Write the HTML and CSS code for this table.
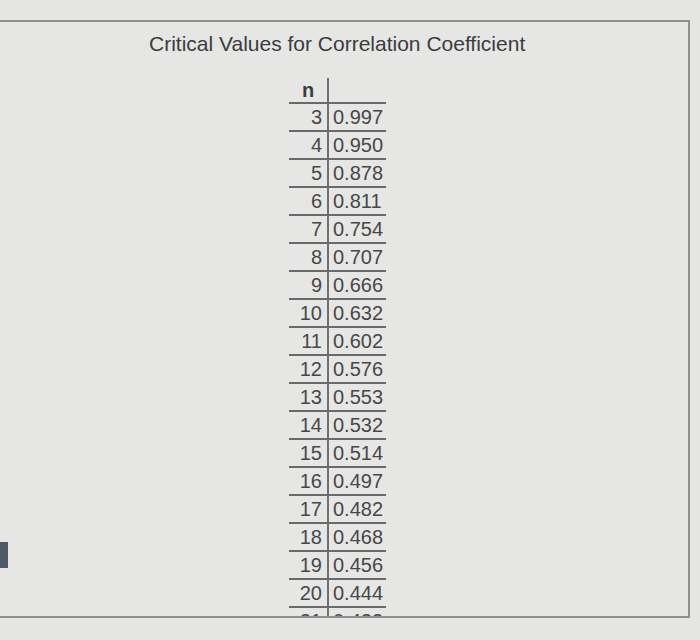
FILE: index.html
```html
<!DOCTYPE html>
<html>
<head>
<meta charset="utf-8">
<link rel="stylesheet" href="styles.css">
</head>
<body>
<div class="frame">
  <h1 class="title">Critical Values for Correlation Coefficient</h1>
  <div class="table">
    <div class="row head"><div class="n">n</div><div class="v"></div></div>
    <div class="row"><div class="n">3</div><div class="v">0.997</div></div>
    <div class="row"><div class="n">4</div><div class="v">0.950</div></div>
    <div class="row"><div class="n">5</div><div class="v">0.878</div></div>
    <div class="row"><div class="n">6</div><div class="v">0.811</div></div>
    <div class="row"><div class="n">7</div><div class="v">0.754</div></div>
    <div class="row"><div class="n">8</div><div class="v">0.707</div></div>
    <div class="row"><div class="n">9</div><div class="v">0.666</div></div>
    <div class="row"><div class="n">10</div><div class="v">0.632</div></div>
    <div class="row"><div class="n">11</div><div class="v">0.602</div></div>
    <div class="row"><div class="n">12</div><div class="v">0.576</div></div>
    <div class="row"><div class="n">13</div><div class="v">0.553</div></div>
    <div class="row"><div class="n">14</div><div class="v">0.532</div></div>
    <div class="row"><div class="n">15</div><div class="v">0.514</div></div>
    <div class="row"><div class="n">16</div><div class="v">0.497</div></div>
    <div class="row"><div class="n">17</div><div class="v">0.482</div></div>
    <div class="row"><div class="n">18</div><div class="v">0.468</div></div>
    <div class="row"><div class="n">19</div><div class="v">0.456</div></div>
    <div class="row"><div class="n">20</div><div class="v">0.444</div></div>
    <div class="row"><div class="n">21</div><div class="v">0.423</div></div>
  </div>
</div>
<div class="tab-marker"></div>
</body>
</html>
```

FILE: styles.css
```css
html, body {
  margin: 0;
  padding: 0;
}
body {
  background: #e5e5e3;
  width: 700px;
  height: 640px;
  overflow: hidden;
  position: relative;
  font-family: "Liberation Sans", Arial, sans-serif;
}
.frame {
  margin-top: 20px;
  width: 688px;
  height: 594px;
  border-top: 2px solid #8e8e8e;
  border-bottom: 2px solid #8e8e8e;
  border-right: 2px solid #8e8e8e;
  background: #e6e6e4;
  overflow: hidden;
}
.title {
  margin: 10px 0 0 149px;
  font-size: 21px;
  line-height: 24px;
  font-weight: normal;
  color: #3b3b40;
  white-space: nowrap;
}
.table {
  margin: 22px 0 0 289px;
  width: 97px;
  color: #47474a;
  font-size: 20px;
}
.row {
  display: flex;
  height: 26px;
  line-height: 26px;
  border-bottom: 2px solid #69696b;
}
.row.head {
  height: 24px;
  line-height: 24px;
}
.n {
  width: 33px;
  padding-right: 5px;
  text-align: right;
  border-right: 2px solid #707072;
}
.head .n {
  padding-right: 0;
  width: 38px;
  text-align: center;
  font-weight: bold;
  color: #3d3d40;
}
.v {
  padding-left: 4px;
  flex: 1;
}
.tab-marker {
  position: absolute;
  left: 0;
  top: 542px;
  width: 8px;
  height: 26px;
  background: #4f5866;
}
```
